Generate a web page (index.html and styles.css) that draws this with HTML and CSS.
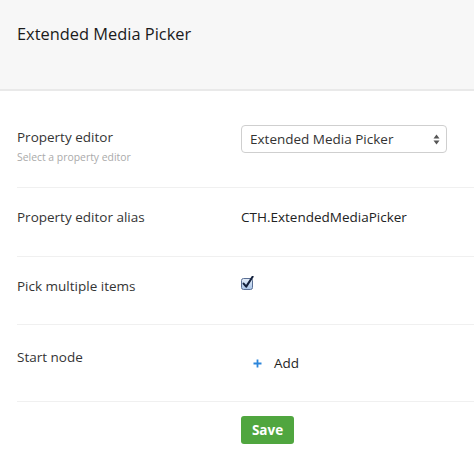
FILE: index.html
```html
<!DOCTYPE html>
<html>
<head>
<meta charset="utf-8">
<link rel="stylesheet" href="styles.css">
</head>
<body>
<header class="header">
  <h1 class="title">Extended Media Picker</h1>
</header>
<main class="form">
  <div class="row row-first">
    <div class="label">
      <div class="label-text">Property editor</div>
      <div class="label-desc">Select a property editor</div>
    </div>
    <div class="control">
      <div class="select">
        <span>Extended Media Picker</span>
        <svg class="select-arrows" width="7" height="11" viewBox="0 0 7 11"><path d="M3.5 0.5 L6.5 4.5 L0.5 4.5 Z M3.5 10.5 L6.5 6.5 L0.5 6.5 Z" fill="#555"/></svg>
      </div>
    </div>
  </div>
  <div class="row row-alias">
    <div class="label"><div class="label-text">Property editor alias</div></div>
    <div class="control"><div class="value">CTH.ExtendedMediaPicker</div></div>
  </div>
  <div class="row">
    <div class="label"><div class="label-text">Pick multiple items</div></div>
    <div class="control">
      <svg class="checkbox" width="13" height="14" viewBox="0 0 13 14">
        <defs>
          <linearGradient id="cb" x1="0" y1="0" x2="0" y2="1">
            <stop offset="0" stop-color="#e6effa"/>
            <stop offset="1" stop-color="#a9c4e8"/>
          </linearGradient>
        </defs>
        <rect x="0.5" y="2.5" width="11" height="11" rx="2" fill="url(#cb)" stroke="#5a6f94"/>
        <path d="M2.6 7.6 L5.2 10.6 L11.6 0.8" fill="none" stroke="#14213d" stroke-width="2.1" stroke-linecap="round" stroke-linejoin="round"/>
      </svg>
    </div>
  </div>
  <div class="row row-last">
    <div class="label label-low"><div class="label-text">Start node</div></div>
    <div class="control">
      <div class="add">
        <svg class="plus" width="9" height="9" viewBox="0 0 9 9"><path d="M4.5 0.5 V8.5 M0.5 4.5 H8.5" stroke="#2d86db" stroke-width="1.8"/></svg>
        <span>Add</span>
      </div>
    </div>
  </div>
  <div class="actions">
    <button class="btn-save">Save</button>
  </div>
</main>
</body>
</html>
```
FILE: styles.css
```css
html, body {
  margin: 0;
  padding: 0;
  background: #ffffff;
  font-family: "Open Sans", "DejaVu Sans", sans-serif;
  color: #343434;
}
.header {
  height: 89px;
  background: #f7f7f7;
  border-bottom: 2px solid #e9e9e9;
  box-sizing: content-box;
  padding-left: 17px;
  display: flex;
  align-items: flex-start;
}
.title {
  margin: 0;
  padding-top: 23px;
  font-size: 16.4px;
  line-height: 22px;
  font-weight: 400;
  color: #1b1b1b;
}
.form {
  padding-left: 17px;
  padding-top: 17px;
}
.row {
  display: flex;
  align-items: flex-start;
  padding: 19px 27px 28px 0;
  border-bottom: 1px solid #f0f0f0;
}
.row-first {
  padding-top: 17px;
  padding-bottom: 23px;
}
.row-alias {
  padding-bottom: 29px;
}
.label {
  width: 224px;
  flex: none;
}
.row-first .label {
  padding-top: 2px;
}
.label-low {
  padding-top: 3px;
}
.label-text {
  font-size: 13.5px;
  line-height: 20px;
  color: #343434;
}
.label-desc {
  font-size: 10.4px;
  line-height: 14px;
  margin-top: 3px;
  color: #aaaaaa;
}
.control {
  flex: 1;
  font-size: 13.5px;
  line-height: 20px;
}
.select {
  height: 28px;
  box-sizing: border-box;
  border: 1px solid #cfcfcf;
  border-radius: 4px;
  background: #fff;
  display: flex;
  align-items: center;
  justify-content: space-between;
  padding: 0 6px 0 8px;
  font-size: 13.5px;
  color: #333;
}
.select-arrows {
  display: block;
}
.value {
  color: #222;
}
.checkbox {
  display: block;
}
.add {
  display: flex;
  align-items: center;
  padding: 9px 0 0 12px;
  color: #1f1f1f;
  font-size: 13.5px;
  line-height: 20px;
}
.plus {
  display: block;
  margin-right: 12px;
}
.actions {
  padding: 14px 0 20px 224px;
}
.btn-save {
  height: 28px;
  width: 53px;
  padding: 0;
  border: none;
  border-radius: 3px;
  background: #50a63f;
  color: #fff;
  font-family: "Open Sans", "DejaVu Sans", sans-serif;
  font-weight: 700;
  font-size: 13.5px;
  line-height: 28px;
  cursor: pointer;
}
```
